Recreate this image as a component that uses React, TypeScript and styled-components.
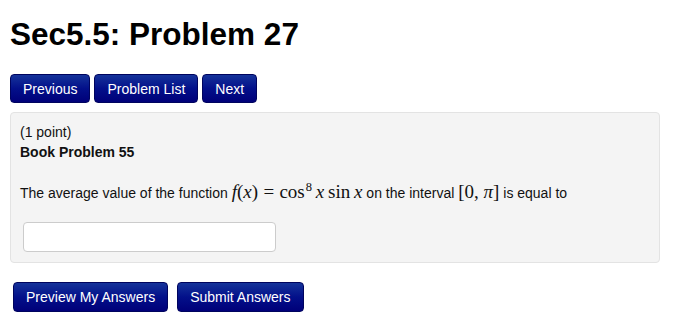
import React from "react";
import styled, { createGlobalStyle } from "styled-components";

const Global = createGlobalStyle`
  html, body { margin: 0; padding: 0; background: #fff; }
  body { font-family: "Liberation Sans", Arial, sans-serif; color: #000; }
`;

const Page = styled.div`
  padding: 0 10px;
`;

const Title = styled.h1`
  margin: 0;
  padding-top: 17px;
  font-size: 31.5px;
  line-height: 35px;
  font-weight: bold;
  color: #000;
`;

const ButtonRow = styled.div<{ $gap: number; $inset: number }>`
  display: flex;
  gap: ${(p) => p.$gap}px;
  margin-left: ${(p) => p.$inset}px;
`;

const NavRow = styled(ButtonRow)`
  margin-top: 22px;
`;

const SubmitRow = styled(ButtonRow)`
  margin-top: 19px;
`;

const Button = styled.button<{ $h: number }>`
  height: ${(p) => p.$h}px;
  padding: 0 12px;
  font-family: "Liberation Sans", Arial, sans-serif;
  font-size: 14px;
  color: #fff;
  border: 1px solid #00045e;
  border-radius: 4px;
  background: linear-gradient(to bottom, #15339a 0%, #03108a 50%, #000079 100%);
  cursor: pointer;
`;

const Well = styled.div`
  margin-top: 9px;
  width: 650px;
  box-sizing: border-box;
  background: #f4f4f4;
  border: 1px solid #e3e3e3;
  border-radius: 4px;
  padding: 9px 9px 10px 9px;
  font-size: 14px;
  line-height: 20px;
  color: #111;
`;

const Line = styled.div<{ $bold?: boolean }>`
  font-weight: ${(p) => (p.$bold ? "bold" : "normal")};
`;

const Question = styled.p`
  margin: 20px 0 0 0;
`;

const Math = styled.span`
  font-family: "Liberation Serif", "DejaVu Serif", serif;
  font-size: 19px;
  line-height: 20px;
  color: #111;
`;

const MI = styled.i`
  font-style: italic;
`;

const Op = styled.span<{ $space: number }>`
  margin: 0 ${(p) => p.$space}em;
`;

const Thin = styled.span`
  margin-left: 0.2em;
`;

const Sup = styled.sup`
  font-size: 12.5px;
  line-height: 0;
  vertical-align: 7px;
  margin-left: 1px;
`;

const Answer = styled.input`
  display: block;
  margin: 19px 0 0 3px;
  width: 253px;
  height: 30px;
  box-sizing: border-box;
  border: 1px solid #cccccc;
  border-radius: 4px;
  background: #fff;
  outline: none;
`;

export default function App() {
  return (
    <>
      <Global />
      <Page>
        <Title>Sec5.5: Problem 27</Title>
        <NavRow $gap={4} $inset={0}>
          <Button $h={29}>Previous</Button>
          <Button $h={29}>Problem List</Button>
          <Button $h={29}>Next</Button>
        </NavRow>
        <Well>
          <Line>(1 point)</Line>
          <Line $bold>Book Problem 55</Line>
          <Question>
            The average value of the function{" "}
            <Math>
              <MI>f</MI>(<MI>x</MI>)<Op $space={0.28}>=</Op>cos<Sup>8</Sup>
              <Thin>
                <MI>x</MI>
              </Thin>
              <Thin>sin</Thin>
              <Thin>
                <MI>x</MI>
              </Thin>
            </Math>{" "}
            on the interval <Math>[0, <MI>π</MI>]</Math> is equal to
          </Question>
          <Answer type="text" />
        </Well>
        <SubmitRow $gap={9} $inset={3}>
          <Button $h={30}>Preview My Answers</Button>
          <Button $h={30}>Submit Answers</Button>
        </SubmitRow>
      </Page>
    </>
  );
}
